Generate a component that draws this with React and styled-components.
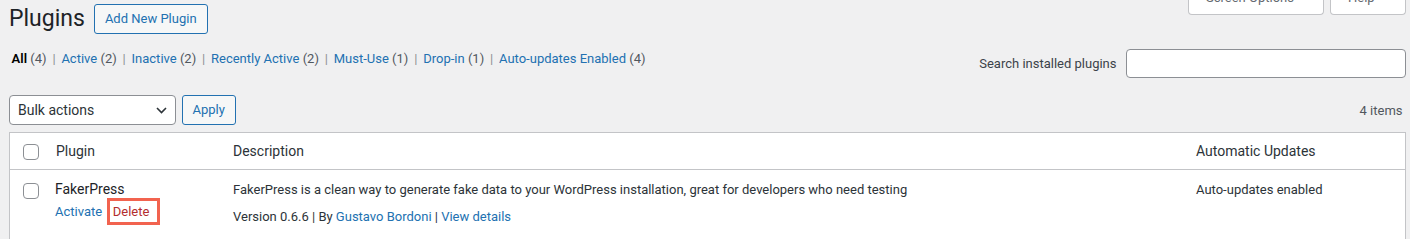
import React from 'react';
import styled, { createGlobalStyle } from 'styled-components';

const GlobalStyle = createGlobalStyle`
  html, body {
    margin: 0;
    padding: 0;
    background: #f0f0f1;
  }
  body {
    font-family: Roboto, "Liberation Sans", sans-serif;
    font-size: 13px;
    color: #3c434a;
    overflow: hidden;
  }
  * { box-sizing: border-box; }
`;

const Page = styled.div`
  padding: 0 4.5px 0 9px;
`;

const TopBar = styled.div`
  display: flex;
  justify-content: space-between;
  align-items: flex-start;
`;

const TitleRow = styled.div`
  display: flex;
  align-items: center;
  margin-top: 4px;
  height: 30px;
`;

const Title = styled.h1`
  margin: 0;
  font-size: 23px;
  font-weight: 400;
  line-height: 30px;
  color: #1d2327;
`;

const Button = styled.button`
  height: 30px;
  padding: 0 10px;
  margin-left: ${p => p.$ml || 0}px;
  border: 1px solid #2271b1;
  border-radius: 3px;
  background: #f6f7f7;
  color: #2271b1;
  font-family: inherit;
  font-size: 13px;
  line-height: 28px;
  cursor: pointer;
`;

const Tabs = styled.div`
  display: flex;
  gap: 6px;
  margin-top: -16px;
`;

const Tab = styled.div`
  height: 30.5px;
  width: ${p => p.$w}px;
  padding: 0 0 2px 17px;
  display: flex;
  align-items: center;
  background: #fff;
  border: 1px solid #c3c4c7;
  border-top: none;
  border-radius: 0 0 4px 4px;
  color: #646970;
  font-size: 13px;
`;

const Caret = styled.span`
  display: inline-block;
  margin-left: 8px;
  width: 0;
  height: 0;
  border-left: 4px solid transparent;
  border-right: 4px solid transparent;
  border-top: 5px solid #646970;
`;

const FilterRow = styled.div`
  display: flex;
  justify-content: space-between;
  align-items: flex-start;
  margin-top: 15px;
`;

const Links = styled.ul`
  list-style: none;
  margin: 1px 0 0;
  padding: 0;
  display: flex;
  white-space: pre;
  font-size: 13px;
  line-height: 18px;
  color: #8c8f94;
`;

const FilterLink = styled.a`
  padding: 0 2.6px;
  text-decoration: none;
  color: ${p => (p.$current ? '#000' : '#2271b1')};
  font-weight: ${p => (p.$current ? 600 : 400)};
`;

const Count = styled.span`
  color: #50575e;
  font-weight: 400;
`;

const SearchBox = styled.div`
  display: flex;
  align-items: center;
  gap: 9px;
`;

const SearchLabel = styled.label`
  font-size: 13px;
  line-height: 18px;
  color: #3c434a;
`;

const SearchInput = styled.input`
  width: 280px;
  height: 29px;
  border: 1px solid #8c8f94;
  border-radius: 4px;
  background: #fff;
  font-family: inherit;
  font-size: 14px;
  padding: 0 8px;
`;

const TableNav = styled.div`
  display: flex;
  align-items: center;
  height: 30px;
  margin-top: 17px;
`;

const SelectBox = styled.div`
  width: 166.5px;
  height: 30px;
  display: flex;
  align-items: center;
  justify-content: space-between;
  padding: 0 8px 0 8px;
  background: #fff;
  border: 1px solid #8c8f94;
  border-radius: 4px;
  color: #2c3338;
  font-size: 14px;
`;

const ItemCount = styled.span`
  margin-left: auto;
  padding-right: 3px;
  color: #50575e;
  font-size: 13px;
`;

const Table = styled.div`
  margin-top: 7px;
  background: #fff;
  border: 1px solid #c3c4c7;
`;

const Row = styled.div`
  display: grid;
  grid-template-columns: 36px 177px 963px 1fr;
  border-bottom: ${p => (p.$head ? '1px solid #c3c4c7' : 'none')};
  min-height: ${p => (p.$head ? 36 : 80)}px;
`;

const CheckCell = styled.div`
  padding: ${p => p.$top}px 0 0 13px;
`;

const Checkbox = styled.span`
  display: block;
  width: 16px;
  height: 16px;
  border: 1px solid #8c8f94;
  border-radius: 4px;
  background: #fff;
`;

const HeadCell = styled.div`
  padding: 8px 10px;
  font-size: 14px;
  line-height: 20px;
  color: #2c3338;
`;

const Cell = styled.div`
  padding: 9px ${p => p.$pl ?? 10}px 12px;
  font-size: 13px;
  line-height: 21px;
  color: #2c3338;
`;

const PluginName = styled.div`
  font-size: 14px;
  line-height: 21px;
  color: #1d2327;
`;

const RowActions = styled.div`
  display: flex;
  margin-top: 1px;
  line-height: 21px;
  font-size: 13px;
`;

const ActionLink = styled.a`
  color: ${p => (p.$danger ? '#b32d2e' : '#2271b1')};
  text-decoration: none;
  ${p => p.$marked && `
    margin-left: 7.6px;
    padding: 0 8px 0 3px;
    outline: 3px solid #f2634f;
  `}
`;

const Desc = styled.p`
  margin: 0 0 6px;
  line-height: 21px;
`;

const Meta = styled.div`
  line-height: 21px;
  a {
    color: #2271b1;
    text-decoration: none;
  }
`;

const filters = [
  ['All', 4, true],
  ['Active', 2],
  ['Inactive', 2],
  ['Recently Active', 2],
  ['Must-Use', 1],
  ['Drop-in', 1],
  ['Auto-updates Enabled', 4],
];

const Chevron = () => (
  <svg width="11" height="7" viewBox="0 0 11 7" fill="none">
    <path d="M1 1l4.5 4.5L10 1" stroke="#2c3338" strokeWidth="1.6" />
  </svg>
);

export default function App() {
  return (
    <Page>
      <GlobalStyle />
      <TopBar>
        <TitleRow>
          <Title>Plugins</Title>
          <Button $ml={9}>Add New Plugin</Button>
        </TitleRow>
        <Tabs>
          <Tab $w={136}>Screen Options<Caret /></Tab>
          <Tab $w={75.5}>Help<Caret /></Tab>
        </Tabs>
      </TopBar>

      <FilterRow>
        <Links>
          {filters.map(([label, n, current], i) => (
            <li key={label}>
              <FilterLink $current={current}>
                {label} <Count>({n})</Count>
              </FilterLink>
              {i < filters.length - 1 ? ' | ' : ''}
            </li>
          ))}
        </Links>
        <SearchBox>
          <SearchLabel>Search installed plugins</SearchLabel>
          <SearchInput type="search" />
        </SearchBox>
      </FilterRow>

      <TableNav>
        <SelectBox>
          Bulk actions
          <Chevron />
        </SelectBox>
        <Button $ml={6}>Apply</Button>
        <ItemCount>4 items</ItemCount>
      </TableNav>

      <Table>
        <Row $head>
          <CheckCell $top={11}><Checkbox /></CheckCell>
          <HeadCell>Plugin</HeadCell>
          <HeadCell>Description</HeadCell>
          <HeadCell>Automatic Updates</HeadCell>
        </Row>
        <Row>
          <CheckCell $top={13}><Checkbox /></CheckCell>
          <Cell $pl={9}>
            <PluginName>FakerPress</PluginName>
            <RowActions>
              <ActionLink>Activate</ActionLink>
              <ActionLink $danger $marked>Delete</ActionLink>
            </RowActions>
          </Cell>
          <Cell>
            <Desc>
              FakerPress is a clean way to generate fake data to your WordPress installation, great for developers who need testing
            </Desc>
            <Meta>
              Version 0.6.6 | By <a>Gustavo Bordoni</a> | <a>View details</a>
            </Meta>
          </Cell>
          <Cell>Auto-updates enabled</Cell>
        </Row>
      </Table>
    </Page>
  );
}
